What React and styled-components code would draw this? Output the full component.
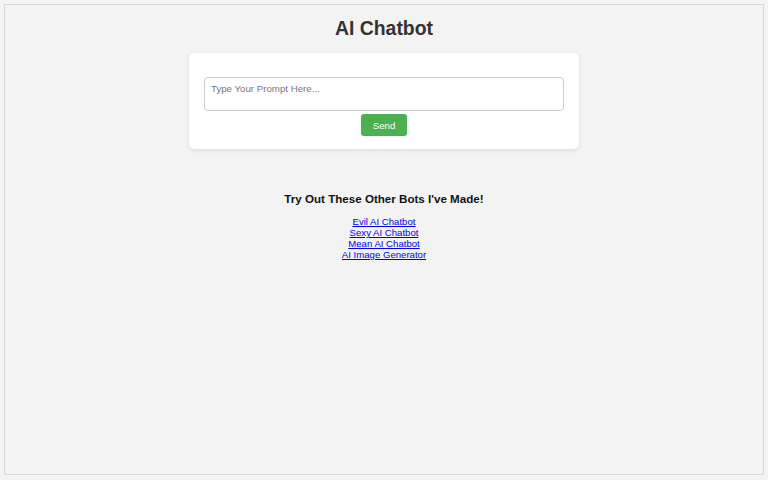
import React from "react";
import styled, { createGlobalStyle } from "styled-components";

const Global = createGlobalStyle`
  html, body { margin: 0; padding: 0; background: #f3f3f3; }
  body { font-family: "Liberation Sans", Arial, sans-serif; }
`;

const Frame = styled.div`
  margin: 4px;
  height: 471px;
  box-sizing: border-box;
  border: 1px solid #d6d6d6;
  background: #f3f3f3;
  display: flex;
  flex-direction: column;
  align-items: center;
  padding-top: 12px;
`;

const Title = styled.h1`
  margin: 0;
  font-size: 19.4px;
  line-height: 23px;
  font-weight: bold;
  color: #333;
`;

const Card = styled.div`
  margin-top: 13px;
  width: 390px;
  box-sizing: border-box;
  background: #fff;
  border-radius: 5px;
  box-shadow: 0 1px 4px rgba(0, 0, 0, 0.12);
  padding: 24px 15px 13px;
  display: flex;
  flex-direction: column;
  align-items: center;
  gap: 3px;
`;

const Prompt = styled.textarea`
  width: 360px;
  height: 34px;
  box-sizing: border-box;
  border: 1px solid #cfcfcf;
  border-radius: 4px;
  padding: 5px 6px;
  resize: none;
  font-family: "Liberation Sans", Arial, sans-serif;
  font-size: 9.7px;
  line-height: 12px;
  outline: none;
  &::placeholder { color: #777; }
`;

const SendButton = styled.button`
  width: 46px;
  height: 22px;
  border: none;
  border-radius: 3px;
  background: #4caf50;
  color: #fff;
  font-family: "Liberation Sans", Arial, sans-serif;
  font-size: 9.7px;
  padding: 0;
  cursor: pointer;
`;

const Others = styled.section`
  margin-top: 43px;
  display: flex;
  flex-direction: column;
  align-items: center;
`;

const OthersTitle = styled.h2`
  margin: 0;
  font-size: 11.6px;
  line-height: 14px;
  font-weight: bold;
  color: #111;
`;

const Links = styled.div`
  margin-top: 10px;
  display: flex;
  flex-direction: column;
  align-items: center;
`;

const BotLink = styled.a`
  font-size: 9.6px;
  line-height: 11px;
  color: #0000ee;
  text-decoration: underline;
`;

export default function App() {
  return (
    <>
      <Global />
      <Frame>
        <Title>AI Chatbot</Title>
        <Card>
          <Prompt placeholder="Type Your Prompt Here..." />
          <SendButton>Send</SendButton>
        </Card>
        <Others>
          <OthersTitle>Try Out These Other Bots I've Made!</OthersTitle>
          <Links>
            <BotLink href="#">Evil AI Chatbot</BotLink>
            <BotLink href="#">Sexy AI Chatbot</BotLink>
            <BotLink href="#">Mean AI Chatbot</BotLink>
            <BotLink href="#">AI Image Generator</BotLink>
          </Links>
        </Others>
      </Frame>
    </>
  );
}
